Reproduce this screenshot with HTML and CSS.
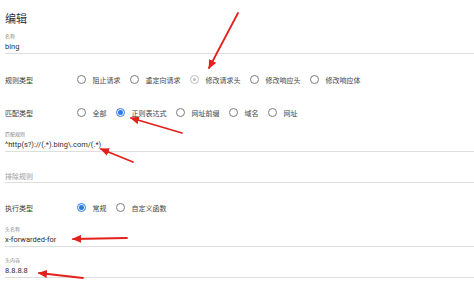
FILE: index.html
```html
<!DOCTYPE html>
<html lang="zh">
<head>
<meta charset="utf-8">
<link rel="stylesheet" href="styles.css">
</head>
<body>
<div class="page">
  <h1 class="title">编辑</h1>

  <div class="field first">
    <div class="flabel">名称</div>
    <div class="fvalue">bing</div>
  </div>

  <div class="row first-row">
    <div class="rlabel">规则类型</div>
    <div class="options">
      <span class="opt"><span class="radio"></span>阻止请求</span>
      <span class="opt"><span class="radio"></span>重定向请求</span>
      <span class="opt"><span class="radio dim checked"></span>修改请求头</span>
      <span class="opt"><span class="radio"></span>修改响应头</span>
      <span class="opt"><span class="radio"></span>修改响应体</span>
    </div>
  </div>

  <div class="row">
    <div class="rlabel">匹配类型</div>
    <div class="options">
      <span class="opt"><span class="radio"></span>全部</span>
      <span class="opt"><span class="radio checked"></span>正则表达式</span>
      <span class="opt"><span class="radio"></span>网址前缀</span>
      <span class="opt"><span class="radio"></span>域名</span>
      <span class="opt"><span class="radio"></span>网址</span>
    </div>
  </div>

  <div class="field">
    <div class="flabel">匹配规则</div>
    <div class="fvalue">^http(s?)://(.*).bing\.com/(.*)</div>
  </div>

  <div class="field">
    <div class="flabel"></div>
    <div class="fvalue placeholder">排除规则</div>
  </div>

  <div class="row">
    <div class="rlabel">执行类型</div>
    <div class="options">
      <span class="opt"><span class="radio checked"></span>常规</span>
      <span class="opt"><span class="radio"></span>自定义函数</span>
    </div>
  </div>

  <div class="field">
    <div class="flabel">头名称</div>
    <div class="fvalue">x-forwarded-for</div>
  </div>

  <div class="field">
    <div class="flabel">头内容</div>
    <div class="fvalue">8.8.8.8</div>
  </div>
</div>

<svg class="annot" width="474" height="297" viewBox="0 0 474 297">
  <defs>
    <marker id="ah" markerUnits="userSpaceOnUse" markerWidth="9" markerHeight="8" refX="8" refY="4" orient="auto">
      <path d="M0,0 L9,4 L0,8 Z" fill="#e3211c"/>
    </marker>
  </defs>
  <g stroke="#e3211c" stroke-width="1.8" fill="none" stroke-linecap="round">
    <line x1="238" y1="13" x2="209" y2="68" marker-end="url(#ah)"/>
    <line x1="182" y1="133" x2="131" y2="118" marker-end="url(#ah)"/>
    <line x1="133" y1="162" x2="101" y2="149" marker-end="url(#ah)"/>
    <line x1="127" y1="238" x2="73" y2="239" marker-end="url(#ah)"/>
    <line x1="83" y1="278" x2="39" y2="273" marker-end="url(#ah)"/>
  </g>
</svg>
</body>
</html>
```

FILE: styles.css
```css
html, body {
  margin: 0;
  padding: 0;
  background: #ffffff;
}

body {
  width: 474px;
  height: 297px;
  overflow: hidden;
  position: relative;
  font-family: Roboto, "Noto Sans CJK SC", sans-serif;
  color: #3c3c3c;
}

.page {
  padding: 11px 0 0 5px;
}

.title {
  margin: 0;
  font-family: "Noto Sans CJK SC", sans-serif;
  font-size: 11px;
  line-height: 14px;
  font-weight: 400;
  color: #333;
}

.field {
  margin-top: 10px;
  border-bottom: 1.5px solid #dedede;
}

.field.first {
  margin-top: 7.5px;
}

.flabel {
  height: 6px;
  font-family: "Noto Sans CJK SC", sans-serif;
  font-size: 5px;
  line-height: 6px;
  color: #8a8a8a;
}

.fvalue {
  margin-top: 2px;
  height: 12px;
  font-family: Roboto, "Noto Sans CJK SC", sans-serif;
  font-size: 7.5px;
  line-height: 12px;
  color: #2e2e2e;
}

.fvalue.placeholder {
  font-family: "Noto Sans CJK SC", sans-serif;
  font-size: 7px;
  color: #9a9a9a;
}

.row {
  margin-top: 17px;
  height: 16px;
  display: flex;
  align-items: center;
}

.row.first-row {
  margin-top: 18px;
}

.rlabel {
  width: 72px;
  flex: none;
  font-family: "Noto Sans CJK SC", sans-serif;
  font-size: 7px;
  color: #3a3a3a;
}

.options {
  display: flex;
  align-items: center;
}

.opt {
  display: flex;
  align-items: center;
  margin-right: 9.5px;
  font-family: "Noto Sans CJK SC", sans-serif;
  font-size: 7px;
  color: #444;
}

.radio {
  width: 9px;
  height: 9px;
  box-sizing: border-box;
  border: 1px solid #7a7a7a;
  border-radius: 50%;
  margin-right: 6.5px;
  display: flex;
  align-items: center;
  justify-content: center;
}

.radio.checked {
  border-color: #2f7be0;
}

.radio.checked::after {
  content: "";
  width: 4.5px;
  height: 4.5px;
  border-radius: 50%;
  background: #2f7be0;
}

.radio.dim {
  border-color: #bdbdbd;
}

.radio.dim::after {
  background: #bdbdbd;
  width: 3.5px;
  height: 3.5px;
}

.annot {
  position: absolute;
  left: 0;
  top: 0;
  pointer-events: none;
}
```
